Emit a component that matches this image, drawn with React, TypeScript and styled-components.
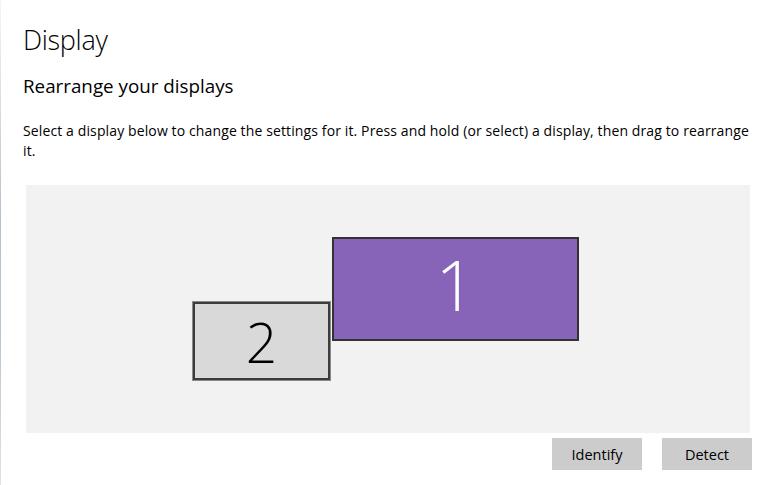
import React from "react"
import styled, { createGlobalStyle } from "styled-components"

const GlobalStyle = createGlobalStyle`
  html, body {
    margin: 0;
    padding: 0;
    background: #ffffff;
  }
  body {
    font-family: "Open Sans", "Noto Sans", "Liberation Sans", sans-serif;
    color: #000000;
  }
`

type Monitor = {
  id: number
  left: number
  top: number
  width: number
  height: number
  selected: boolean
  numberSize: number
}

const monitors: Monitor[] = [
  { id: 2, left: 167, top: 117, width: 137, height: 78, selected: false, numberSize: 55 },
  { id: 1, left: 306, top: 52, width: 247, height: 104, selected: true, numberSize: 70 },
]

const App = () => {
  return (
    <>
      <GlobalStyle />
      <WindowStyled>
        <EdgeStyled />
        <PageStyled>
          <TitleStyled>Display</TitleStyled>
          <SubTitleStyled>Rearrange your displays</SubTitleStyled>
          <HintStyled>
            Select a display below to change the settings for it. Press and hold
            (or select) a display, then drag to rearrange it.
          </HintStyled>
          <ArrangeStyled>
            {monitors.map(m => (
              <MonitorStyled
                key={m.id}
                selected={m.selected}
                style={{ left: m.left, top: m.top, width: m.width, height: m.height }}
              >
                <NumberStyled selected={m.selected} size={m.numberSize}>
                  {m.id}
                </NumberStyled>
              </MonitorStyled>
            ))}
          </ArrangeStyled>
          <ActionsStyled>
            <ButtonStyled>Identify</ButtonStyled>
            <ButtonStyled>Detect</ButtonStyled>
          </ActionsStyled>
        </PageStyled>
      </WindowStyled>
    </>
  )
}

const WindowStyled = styled.div`
  display: flex;
  width: 758px;
  height: 485px;
  overflow: hidden;
`

const EdgeStyled = styled.div`
  width: 1px;
  flex: none;
  background: linear-gradient(
    to bottom,
    #f4f5f7 0%,
    #d9dfe6 20%,
    #b4c0cc 45%,
    #b9c6d2 70%,
    #dde3ea 100%
  );
`

const PageStyled = styled.div`
  display: flex;
  flex-direction: column;
  width: 728px;
  padding: 22px 0 0 22px;
`

const TitleStyled = styled.div`
  font-size: 27px;
  font-weight: 300;
  line-height: 36px;
  letter-spacing: -0.3px;
`

const SubTitleStyled = styled.div`
  font-size: 18.8px;
  line-height: 28px;
  margin-top: 14px;
`

const HintStyled = styled.div`
  font-size: 14px;
  line-height: 20px;
  margin-top: 21px;
  letter-spacing: 0.12px;
`

const ArrangeStyled = styled.div`
  position: relative;
  margin: 24px 0 0 3px;
  width: 724px;
  height: 248px;
  background: #f2f2f2;
`

type Selectable = {
  selected: boolean
}

const MonitorStyled = styled.div<Selectable>`
  position: absolute;
  box-sizing: border-box;
  display: flex;
  align-items: center;
  justify-content: center;
  background: ${props => (props.selected ? "#8764b8" : "#d9d9d9")};
  border: 2px solid ${props => (props.selected ? "#333333" : "#3c3c3c")};
  ${props => !props.selected && "box-shadow: 0 0 0 1px #8a8a8a;"};
`

const NumberStyled = styled.div<Selectable & { size: number }>`
  font-size: ${props => props.size}px;
  font-weight: 300;
  line-height: 1;
  padding-bottom: ${props => (props.selected ? 11 : 0)}px;
  color: ${props => (props.selected ? "#ffffff" : "#000000")};
`

const ActionsStyled = styled.div`
  display: flex;
  justify-content: flex-end;
  gap: 20px;
  margin-top: 5px;
  width: 729px;
`

const ButtonStyled = styled.button`
  width: 90px;
  height: 32px;
  border: none;
  padding: 0;
  background: #cccccc;
  font-family: "Open Sans", "Noto Sans", "Liberation Sans", sans-serif;
  font-size: 14.5px;
  color: #000000;
`

export default App
